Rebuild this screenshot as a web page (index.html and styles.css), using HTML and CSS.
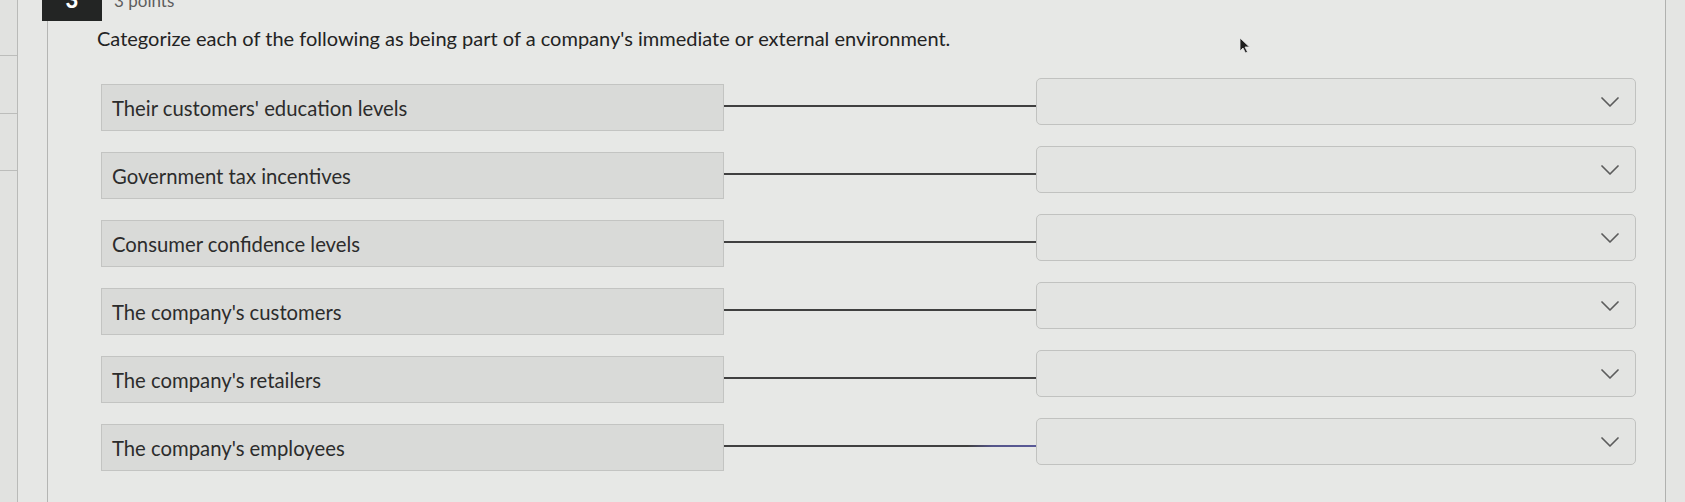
FILE: index.html
```html
<!DOCTYPE html>
<html lang="en">
<head>
<meta charset="utf-8">
<title>Question 3</title>
<link rel="stylesheet" href="styles.css">
</head>
<body>
  <nav class="rail">
    <div class="rail-item rail-item-a"></div>
    <div class="rail-item rail-item-b"></div>
    <div class="rail-item rail-item-c"></div>
  </nav>
  <div class="gutter"></div>
  <main class="card">
    <div class="card-head">
      <div class="badge"><span>3</span></div>
      <div class="points">3 points</div>
    </div>
    <p class="question">Categorize each of the following as being part of a company's immediate or external environment.</p>
    <div class="matches">
      <div class="row">
        <div class="prompt">Their customers' education levels</div>
        <div class="line"></div>
        <div class="select"><svg class="chev" width="18" height="10" viewBox="0 0 18 10"><polyline points="1,1 9,9 17,1"/></svg></div>
      </div>
      <div class="row">
        <div class="prompt">Government tax incentives</div>
        <div class="line"></div>
        <div class="select"><svg class="chev" width="18" height="10" viewBox="0 0 18 10"><polyline points="1,1 9,9 17,1"/></svg></div>
      </div>
      <div class="row">
        <div class="prompt">Consumer confidence levels</div>
        <div class="line"></div>
        <div class="select"><svg class="chev" width="18" height="10" viewBox="0 0 18 10"><polyline points="1,1 9,9 17,1"/></svg></div>
      </div>
      <div class="row">
        <div class="prompt">The company's customers</div>
        <div class="line"></div>
        <div class="select"><svg class="chev" width="18" height="10" viewBox="0 0 18 10"><polyline points="1,1 9,9 17,1"/></svg></div>
      </div>
      <div class="row">
        <div class="prompt">The company's retailers</div>
        <div class="line"></div>
        <div class="select"><svg class="chev" width="18" height="10" viewBox="0 0 18 10"><polyline points="1,1 9,9 17,1"/></svg></div>
      </div>
      <div class="row">
        <div class="prompt">The company's employees</div>
        <div class="line line-active"></div>
        <div class="select"><svg class="chev" width="18" height="10" viewBox="0 0 18 10"><polyline points="1,1 9,9 17,1"/></svg></div>
      </div>
    </div>
    <svg class="cursor" width="12" height="17" viewBox="0 0 12 17"><path d="M1 1 L1 14 L4 11 L6.5 16 L8.5 15 L6 10 L10.5 10 Z"/></svg>
  </main>
</body>
</html>
```
FILE: styles.css
```css
html, body {
  margin: 0;
  padding: 0;
}
body {
  width: 1685px;
  height: 502px;
  overflow: hidden;
  display: flex;
  background: #e4e5e3;
  font-family: Lato, "Open Sans", "Liberation Sans", sans-serif;
  color: #2e2e2e;
}
.rail {
  width: 17px;
  flex: none;
  border-right: 1px solid #b9bab8;
  background: #e1e2e0;
}
.rail-item {
  border-bottom: 1px solid #bcbdbb;
}
.rail-item-a { height: 55px; }
.rail-item-b { height: 57px; }
.rail-item-c { height: 56px; }
.gutter {
  width: 29px;
  flex: none;
  background: #e6e7e5;
}
.card {
  flex: 1;
  position: relative;
  border-left: 1px solid #b4b5b3;
  border-right: 1px solid #b0b1af;
  margin-right: 19px;
  background: #e7e8e6;
}
.card-head {
  display: flex;
  align-items: flex-end;
  height: 21px;
  margin-left: -6px;
}
.badge {
  width: 60px;
  height: 21px;
  background: #232524;
  color: #fff;
  display: flex;
  align-items: flex-end;
  justify-content: center;
  overflow: hidden;
  font-weight: 900;
  font-size: 22px;
  line-height: 1;
  padding-bottom: 10px;
  box-sizing: border-box;
}
.points {
  margin-left: 12px;
  margin-bottom: 12px;
  font-size: 17px;
  line-height: 1;
  color: #5d5d5d;
}
.question {
  margin: 5px 0 0 49px;
  font-size: 20px;
  line-height: 24px;
  color: #232323;
}
.matches {
  display: flex;
  flex-direction: column;
  gap: 15px;
  margin-top: 28px;
  padding-left: 53px;
}
.row {
  display: flex;
  align-items: flex-start;
  height: 53px;
}
.prompt {
  width: 623px;
  height: 47px;
  box-sizing: border-box;
  margin-top: 6px;
  background: #d9dad8;
  border: 1px solid #c3c4c2;
  display: flex;
  align-items: center;
  padding-left: 10px;
  font-size: 20.3px;
  color: #2c2c2c;
}
.line {
  width: 312px;
  height: 2px;
  margin-top: 27px;
  background: #404040;
}
.line-active {
  background: linear-gradient(to right, #404040 0, #404040 78%, #55558a 86%, #5a5a98 100%);
}
.select {
  width: 600px;
  height: 47px;
  box-sizing: border-box;
  background: #e3e4e2;
  border: 1px solid #c1c2c0;
  border-radius: 5px;
  display: flex;
  align-items: center;
  justify-content: flex-end;
  padding-right: 16px;
}
.chev polyline {
  fill: none;
  stroke: #5c5c5c;
  stroke-width: 1.7;
  stroke-linecap: round;
  stroke-linejoin: round;
}
.cursor {
  position: absolute;
  left: 1191px;
  top: 37px;
}
.cursor path {
  fill: #1e1e1e;
  stroke: #e8e8e8;
  stroke-width: 0.8;
}
```
